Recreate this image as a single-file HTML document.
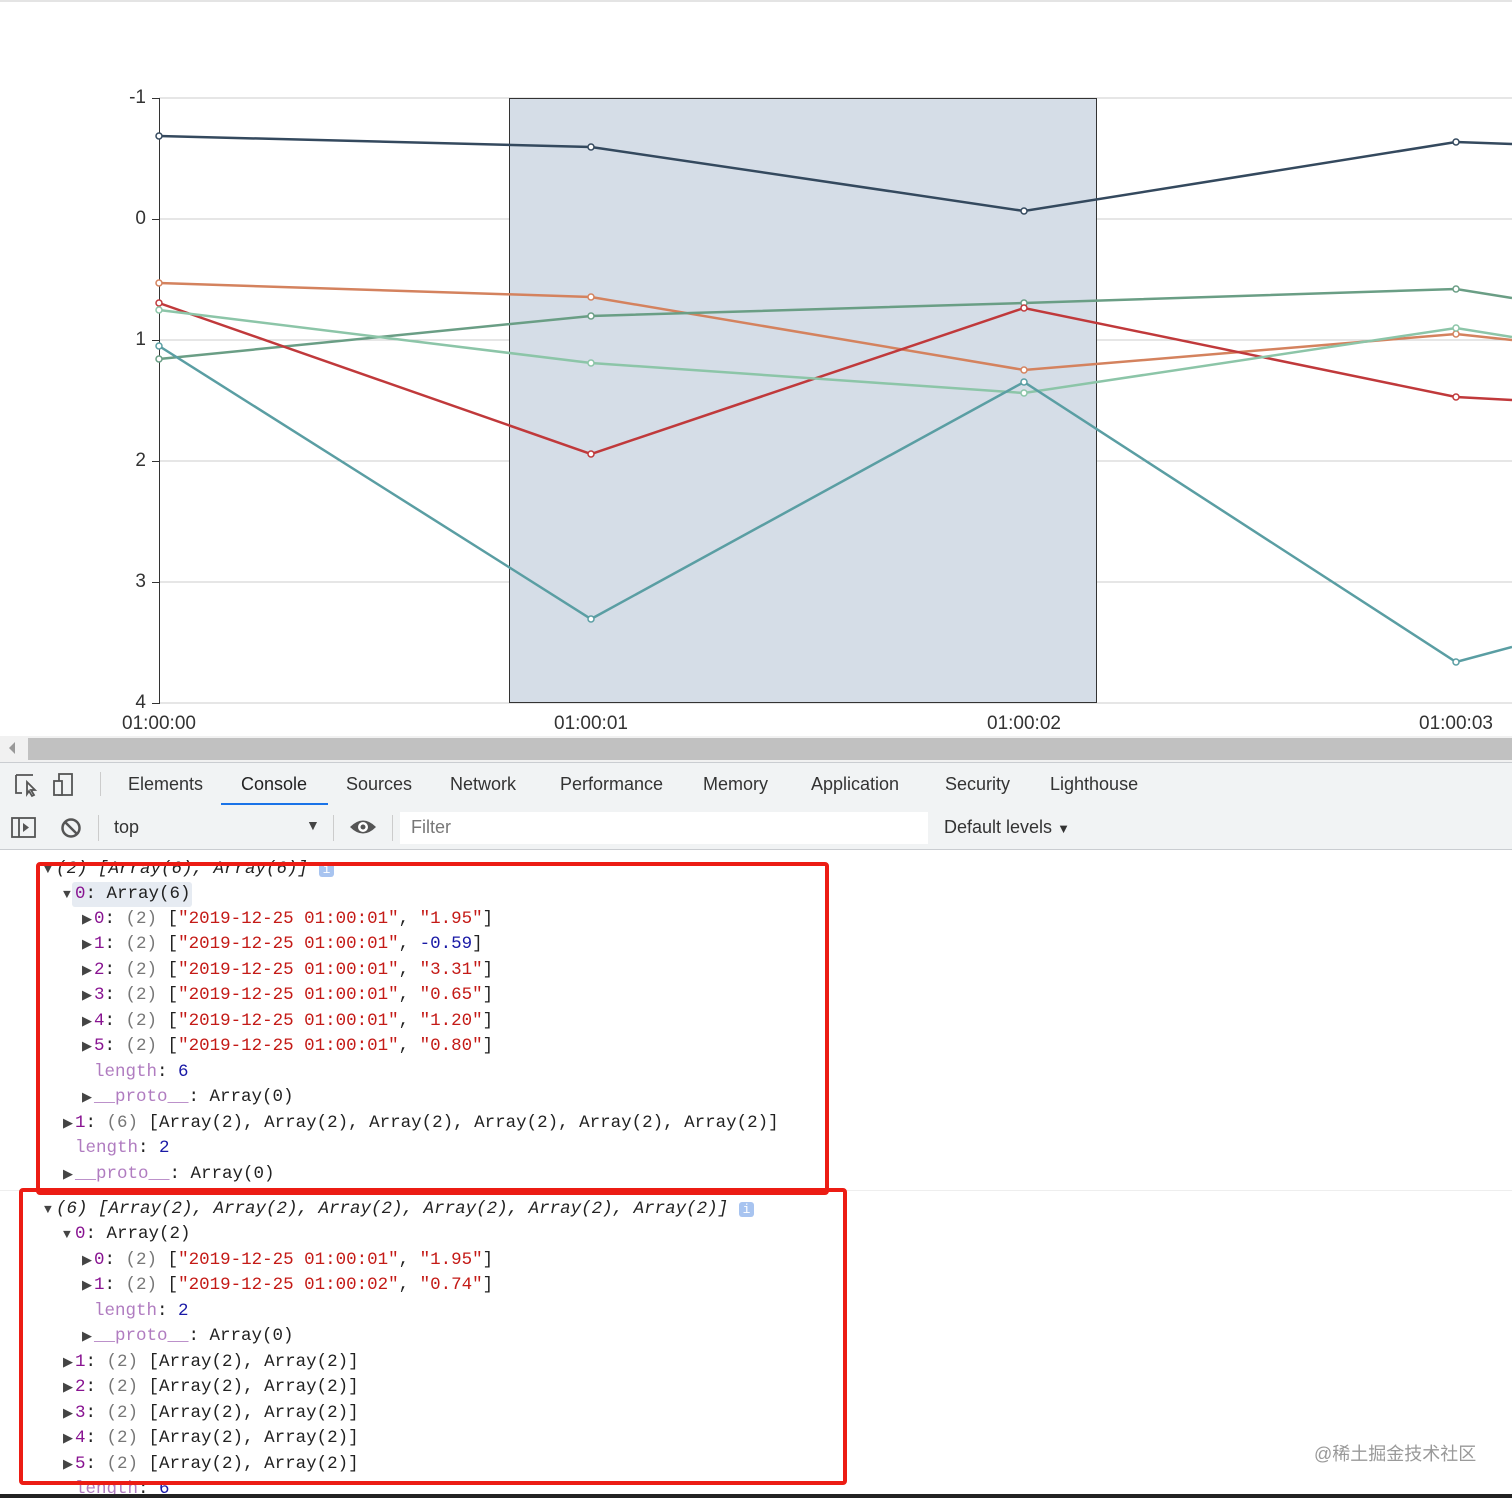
<!DOCTYPE html>
<html><head><meta charset="utf-8"><style>
body{margin:0;width:1512px;height:1498px;position:relative;overflow:hidden;background:#fff;font-family:"Liberation Sans",sans-serif}
.a{position:absolute}
.tab{position:absolute;top:774px;font-size:18px;color:#333}
.ln{position:absolute;font-family:"Liberation Mono",monospace;font-size:17.5px;line-height:25px;white-space:pre;color:#222}
.k{color:#881391}.g{color:#777}.s{color:#c41a16}.n{color:#1a1aa6}.p{color:#b07cc0}
.tri{display:inline-block;width:12px;font-size:13px;color:#444;vertical-align:top}
</style></head><body>
<div class="a" style="left:0;top:0;width:1512px;height:2px;background:#e4e4e4"></div>
<svg class="a" style="left:0;top:0" width="1512" height="736">
<g stroke="#ccc" stroke-width="1">
<line x1="159" y1="98" x2="1512" y2="98"/><line x1="159" y1="219" x2="1512" y2="219"/><line x1="159" y1="340" x2="1512" y2="340"/><line x1="159" y1="461" x2="1512" y2="461"/><line x1="159" y1="582" x2="1512" y2="582"/><line x1="159" y1="703" x2="1512" y2="703"/>
</g>
<rect x="509.5" y="98.5" width="587" height="604" fill="#d5dde7" stroke="#333" stroke-width="1"/>
<g stroke="#333"><line x1="159.5" y1="98" x2="159.5" y2="704"/>
<line x1="152" y1="98.5" x2="159" y2="98.5"/><line x1="152" y1="219.5" x2="159" y2="219.5"/><line x1="152" y1="340.5" x2="159" y2="340.5"/><line x1="152" y1="461.5" x2="159" y2="461.5"/><line x1="152" y1="582.5" x2="159" y2="582.5"/><line x1="152" y1="703.5" x2="159" y2="703.5"/></g>
<g font-family="Liberation Sans" font-size="19" fill="#333" text-anchor="end">
<text x="146" y="103">-1</text><text x="146" y="224">0</text><text x="146" y="345">1</text><text x="146" y="466">2</text><text x="146" y="587">3</text><text x="146" y="708">4</text></g>
<g font-family="Liberation Sans" font-size="19" fill="#333" text-anchor="middle">
<text x="159" y="729">01:00:00</text><text x="591" y="729">01:00:01</text><text x="1024" y="729">01:00:02</text><text x="1456" y="729">01:00:03</text></g>
<g fill="none" stroke-width="2.5">
<polyline stroke="#34495e" points="159,136 591,147 1024,211 1456,142 1512,144"/>
<polyline stroke="#d4825e" points="159,283 591,297 1024,370 1456,334 1512,340"/>
<polyline stroke="#6a9e85" points="159,359 591,316 1024,303 1456,289 1512,298"/>
<polyline stroke="#c0393b" points="159,303 591,454 1024,308 1456,397 1512,400"/>
<polyline stroke="#8cc5a8" points="159,310 591,363 1024,393 1456,328 1512,337"/>
<polyline stroke="#5a9ea3" points="159,346 591,619 1024,382 1456,662 1512,647"/>
</g>
<g fill="#fff" stroke-width="1.5">
<g stroke="#34495e"><circle cx="159" cy="136" r="3"/><circle cx="591" cy="147" r="3"/><circle cx="1024" cy="211" r="3"/><circle cx="1456" cy="142" r="3"/></g>
<g stroke="#d4825e"><circle cx="159" cy="283" r="3"/><circle cx="591" cy="297" r="3"/><circle cx="1024" cy="370" r="3"/><circle cx="1456" cy="334" r="3"/></g>
<g stroke="#6a9e85"><circle cx="159" cy="359" r="3"/><circle cx="591" cy="316" r="3"/><circle cx="1024" cy="303" r="3"/><circle cx="1456" cy="289" r="3"/></g>
<g stroke="#c0393b"><circle cx="159" cy="303" r="3"/><circle cx="591" cy="454" r="3"/><circle cx="1024" cy="308" r="3"/><circle cx="1456" cy="397" r="3"/></g>
<g stroke="#8cc5a8"><circle cx="159" cy="310" r="3"/><circle cx="591" cy="363" r="3"/><circle cx="1024" cy="393" r="3"/><circle cx="1456" cy="328" r="3"/></g>
<g stroke="#5a9ea3"><circle cx="159" cy="346" r="3"/><circle cx="591" cy="619" r="3"/><circle cx="1024" cy="382" r="3"/><circle cx="1456" cy="662" r="3"/></g>
</g></svg>
<div class="a" style="left:0;top:736px;width:1512px;height:26px;background:#f1f1f1"></div>
<div class="a" style="left:28px;top:738px;width:1484px;height:22px;background:#c1c1c1"></div>
<div class="a" style="left:9px;top:742px;width:0;height:0;border:6px solid transparent;border-right:6px solid #999;border-left:0"></div>
<div class="a" style="left:0;top:762px;width:1512px;height:44px;background:#f1f3f4;border-bottom:1px solid #cacdd1;border-top:1px solid #cacdd1"></div>
<svg class="a" style="left:14px;top:772px" width="70" height="26"><path d="M2 3h17M2 3v18h6M13 10l8 8-4 0 3 5-2 1-3-5-2 3z" fill="none" stroke="#555" stroke-width="1.8"/><rect x="45" y="2" width="13" height="21" fill="none" stroke="#555" stroke-width="1.8"/><rect x="40" y="9" width="8" height="14" fill="#f1f3f4" stroke="#555" stroke-width="1.8"/></svg>
<div class="a" style="left:100px;top:772px;width:1px;height:24px;background:#ccc"></div>
<div class="tab" style="left:128px">Elements</div><div class="tab" style="left:241px;color:#222">Console</div>
<div class="a" style="left:221px;top:803px;width:107px;height:2px;background:#1a73e8"></div>
<div class="tab" style="left:346px">Sources</div><div class="tab" style="left:450px">Network</div><div class="tab" style="left:560px">Performance</div><div class="tab" style="left:703px">Memory</div><div class="tab" style="left:811px">Application</div><div class="tab" style="left:945px">Security</div><div class="tab" style="left:1050px">Lighthouse</div>
<div class="a" style="left:0;top:807px;width:1512px;height:42px;background:#f1f3f4;border-bottom:1px solid #cacdd1"></div>
<svg class="a" style="left:10px;top:815px" width="75" height="26"><rect x="2" y="3" width="23" height="19" fill="none" stroke="#555" stroke-width="1.8"/><line x1="9" y1="3" x2="9" y2="22" stroke="#555" stroke-width="1.8"/><path d="M13 8l6 4.5-6 4.5z" fill="#555"/><circle cx="61" cy="13" r="8.5" fill="none" stroke="#555" stroke-width="2.5"/><line x1="55" y1="7" x2="67" y2="19" stroke="#555" stroke-width="2.5"/></svg>
<div class="a" style="left:98px;top:815px;width:1px;height:26px;background:#ccc"></div>
<div class="a" style="left:114px;top:817px;font-size:18px;color:#333">top</div>
<div class="a" style="left:306px;top:817px;font-size:14px;color:#444">▼</div>
<div class="a" style="left:333px;top:815px;width:1px;height:26px;background:#ccc"></div>
<svg class="a" style="left:349px;top:817px" width="28" height="20"><path d="M1 10Q14-3 27 10Q14 23 1 10z" fill="#555"/><circle cx="14" cy="10" r="5" fill="#fff"/><circle cx="14" cy="10" r="2.5" fill="#555"/></svg>
<div class="a" style="left:392px;top:815px;width:1px;height:26px;background:#ccc"></div>
<div class="a" style="left:400px;top:812px;width:528px;height:32px;background:#fff"></div>
<div class="a" style="left:411px;top:817px;font-size:18px;color:#777">Filter</div>
<div class="a" style="left:944px;top:817px;font-size:18px;color:#333">Default levels <span style="font-size:13px">▼</span></div>
<div class="a" style="left:0;top:1190px;width:1512px;height:1px;background:#eee"></div>
<div class="a" style="left:72px;top:882px;width:120px;height:25px;background:#e6ebf2;border-radius:3px"></div>

<div class="ln" style="left:44px;top:857px"><span class="tri">▼</span><i>(2) [Array(6), Array(6)]</i> <span style="background:#a8c4f0;color:#fff;font-size:13px;border-radius:3px;padding:0 4px">i</span></div>
<div class="ln" style="left:63px;top:882px"><span class="tri">▼</span><span class="k">0</span>: Array(6)</div>
<div class="ln" style="left:82px;top:907px"><span class="tri">▶</span><span class="k">0</span>: <span class="g">(2)</span> [<span class="s">"2019-12-25 01:00:01"</span>, <span class="s">"1.95"</span>]</div>
<div class="ln" style="left:82px;top:932px"><span class="tri">▶</span><span class="k">1</span>: <span class="g">(2)</span> [<span class="s">"2019-12-25 01:00:01"</span>, <span class="n">-0.59</span>]</div>
<div class="ln" style="left:82px;top:958px"><span class="tri">▶</span><span class="k">2</span>: <span class="g">(2)</span> [<span class="s">"2019-12-25 01:00:01"</span>, <span class="s">"3.31"</span>]</div>
<div class="ln" style="left:82px;top:983px"><span class="tri">▶</span><span class="k">3</span>: <span class="g">(2)</span> [<span class="s">"2019-12-25 01:00:01"</span>, <span class="s">"0.65"</span>]</div>
<div class="ln" style="left:82px;top:1009px"><span class="tri">▶</span><span class="k">4</span>: <span class="g">(2)</span> [<span class="s">"2019-12-25 01:00:01"</span>, <span class="s">"1.20"</span>]</div>
<div class="ln" style="left:82px;top:1034px"><span class="tri">▶</span><span class="k">5</span>: <span class="g">(2)</span> [<span class="s">"2019-12-25 01:00:01"</span>, <span class="s">"0.80"</span>]</div>
<div class="ln" style="left:82px;top:1060px"><span class="tri"> </span><span class="p">length</span>: <span class="n">6</span></div>
<div class="ln" style="left:82px;top:1085px"><span class="tri">▶</span><span class="p">__proto__</span>: Array(0)</div>
<div class="ln" style="left:63px;top:1111px"><span class="tri">▶</span><span class="k">1</span>: <span class="g">(6)</span> [Array(2), Array(2), Array(2), Array(2), Array(2), Array(2)]</div>
<div class="ln" style="left:63px;top:1136px"><span class="tri"> </span><span class="p">length</span>: <span class="n">2</span></div>
<div class="ln" style="left:63px;top:1162px"><span class="tri">▶</span><span class="p">__proto__</span>: Array(0)</div>

<div class="ln" style="left:44px;top:1197px"><span class="tri">▼</span><i>(6) [Array(2), Array(2), Array(2), Array(2), Array(2), Array(2)]</i> <span style="background:#a8c4f0;color:#fff;font-size:13px;border-radius:3px;padding:0 4px">i</span></div>
<div class="ln" style="left:63px;top:1222px"><span class="tri">▼</span><span class="k">0</span>: Array(2)</div>
<div class="ln" style="left:82px;top:1248px"><span class="tri">▶</span><span class="k">0</span>: <span class="g">(2)</span> [<span class="s">"2019-12-25 01:00:01"</span>, <span class="s">"1.95"</span>]</div>
<div class="ln" style="left:82px;top:1273px"><span class="tri">▶</span><span class="k">1</span>: <span class="g">(2)</span> [<span class="s">"2019-12-25 01:00:02"</span>, <span class="s">"0.74"</span>]</div>
<div class="ln" style="left:82px;top:1299px"><span class="tri"> </span><span class="p">length</span>: <span class="n">2</span></div>
<div class="ln" style="left:82px;top:1324px"><span class="tri">▶</span><span class="p">__proto__</span>: Array(0)</div>
<div class="ln" style="left:63px;top:1350px"><span class="tri">▶</span><span class="k">1</span>: <span class="g">(2)</span> [Array(2), Array(2)]</div>
<div class="ln" style="left:63px;top:1375px"><span class="tri">▶</span><span class="k">2</span>: <span class="g">(2)</span> [Array(2), Array(2)]</div>
<div class="ln" style="left:63px;top:1401px"><span class="tri">▶</span><span class="k">3</span>: <span class="g">(2)</span> [Array(2), Array(2)]</div>
<div class="ln" style="left:63px;top:1426px"><span class="tri">▶</span><span class="k">4</span>: <span class="g">(2)</span> [Array(2), Array(2)]</div>
<div class="ln" style="left:63px;top:1452px"><span class="tri">▶</span><span class="k">5</span>: <span class="g">(2)</span> [Array(2), Array(2)]</div>
<div class="ln" style="left:63px;top:1477px"><span class="tri"> </span><span class="p">length</span>: <span class="n">6</span></div>

<div class="a" style="left:36px;top:862px;width:785px;height:325px;border:4px solid #ec1c14;border-radius:4px"></div>
<div class="a" style="left:19px;top:1188px;width:820px;height:289px;border:4px solid #ec1c14;border-radius:4px"></div>
<div class="a" style="left:1314px;top:1440px;font-size:18px;color:#999;font-family:'Liberation Sans','Noto Sans CJK SC',sans-serif">@稀土掘金技术社区</div>
<div class="a" style="left:0;top:1494px;width:1512px;height:4px;background:#222"></div>
</body></html>
